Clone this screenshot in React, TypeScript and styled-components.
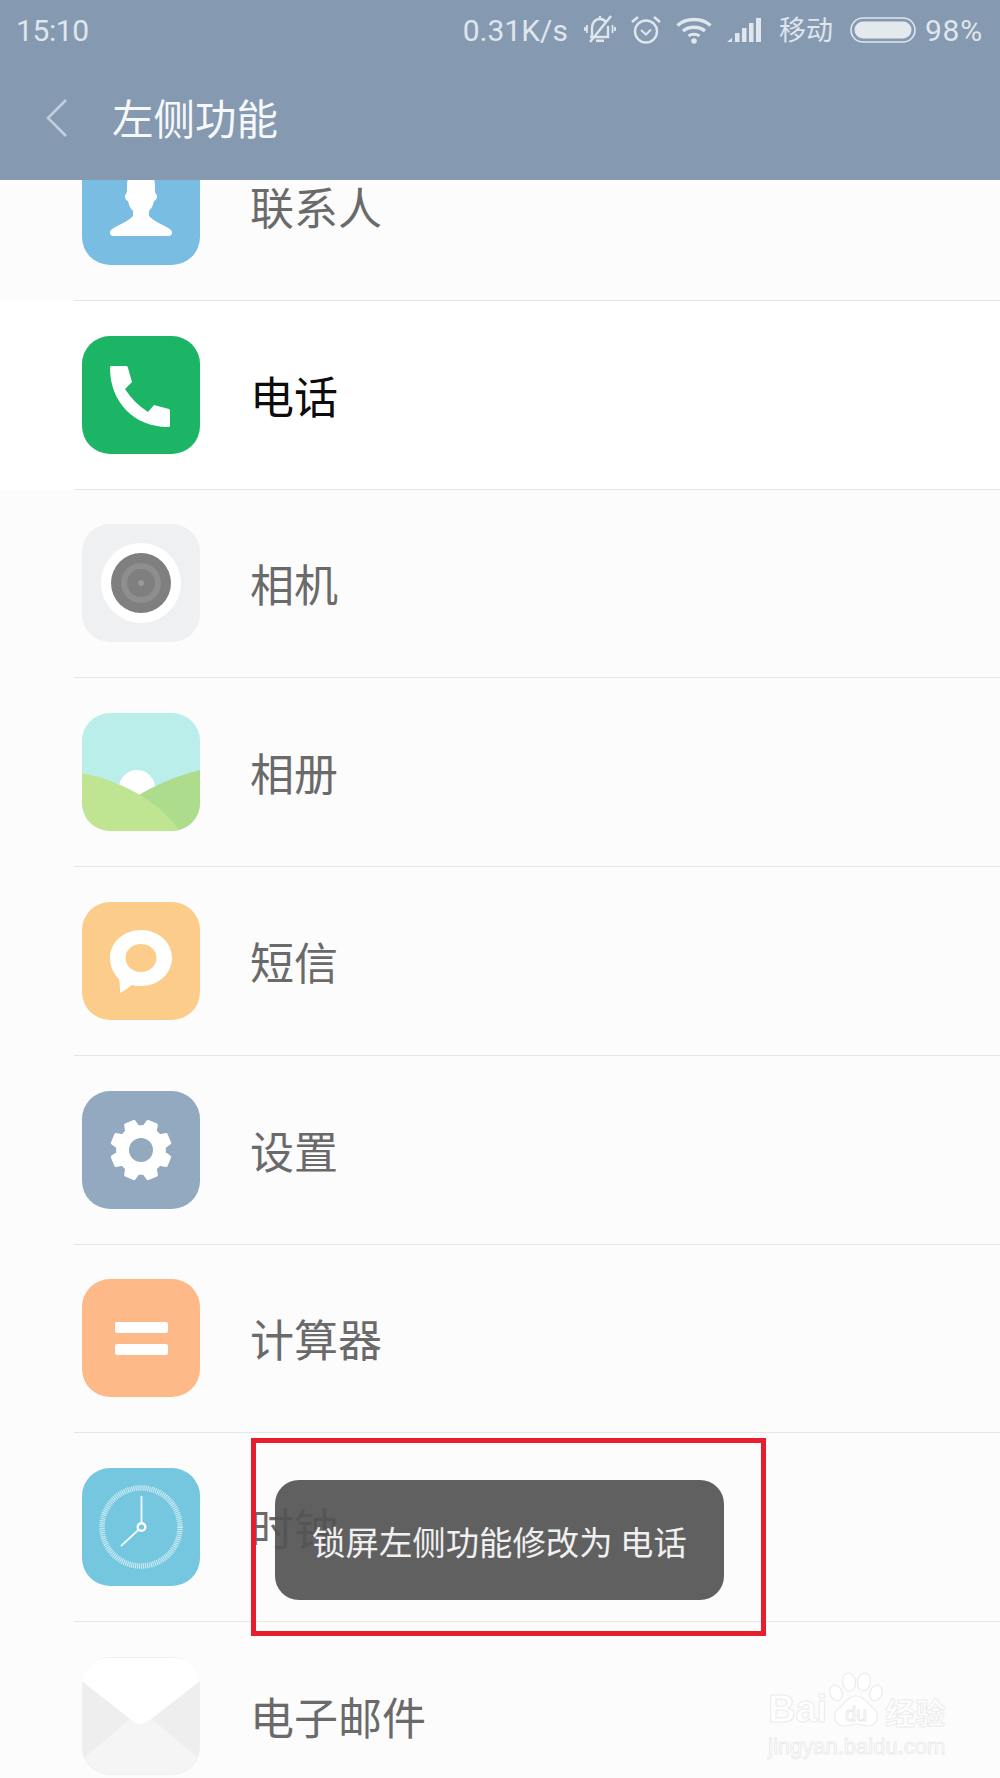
import styled, { createGlobalStyle } from "styled-components";
import type { ReactNode } from "react";

const cjk = `"Noto Sans CJK SC", "Noto Sans", sans-serif`;
const latin = `Roboto, "Noto Sans CJK SC", sans-serif`;

const GlobalStyle = createGlobalStyle`
  html, body {
    margin: 0;
    padding: 0;
    background: #fcfcfc;
  }
  body {
    font-family: ${cjk};
  }
`;

const Page = styled.div`
  position: relative;
  width: 1000px;
  height: 1778px;
  overflow: hidden;
  background: #fcfcfc;
`;

const Header = styled.header`
  position: relative;
  z-index: 2;
  height: 180px;
  box-sizing: border-box;
  background: #8599b1;
  border-bottom: 1px solid #8c9aab;
`;

const StatusBar = styled.div`
  display: flex;
  align-items: center;
  justify-content: space-between;
  height: 56px;
  padding: 4px 17px 0 16px;
  box-sizing: border-box;
  color: #dfe6ed;
  font-family: ${latin};
  font-size: 30px;
  font-weight: 400;
`;

const Clock = styled.span`
  letter-spacing: -0.4px;
`;

const StatusRight = styled.div`
  display: flex;
  align-items: center;
`;

const StatusItem = styled.span<{ $gap: number }>`
  display: flex;
  align-items: center;
  margin-left: ${(p) => p.$gap}px;
`;

const Carrier = styled.span`
  margin-top: -4px;
  font-family: ${cjk};
  font-size: 27px;
`;

const BatteryLevel = styled.span`
  letter-spacing: 0.8px;
`;

const NavBar = styled.div`
  display: flex;
  align-items: center;
  height: 123px;
  padding-left: 46px;
`;

const Title = styled.h1`
  margin: 0 0 0 44px;
  color: #f6f8fa;
  font-size: 41.5px;
  font-weight: 400;
  line-height: 1;
`;

const List = styled.div`
  margin-top: -68px;
`;

const Row = styled.div<{ $active?: boolean }>`
  height: 188.75px;
  box-sizing: border-box;
  padding-left: 74px;
  background: ${(p) => (p.$active ? "#ffffff" : "#fcfcfc")};
`;

const RowBody = styled.div`
  display: flex;
  align-items: center;
  height: 100%;
  box-sizing: border-box;
  padding-left: 8px;
  border-bottom: 1px solid #e6e6e6;
`;

const AppIcon = styled.div<{ $bg: string }>`
  flex: none;
  width: 118px;
  height: 118px;
  border-radius: 28px;
  overflow: hidden;
  background: ${(p) => p.$bg};

  svg {
    display: block;
  }
`;

const RowLabel = styled.span<{ $active?: boolean }>`
  margin-left: 50px;
  color: ${(p) => (p.$active ? "#0c0c0c" : "#6a6a6a")};
  font-size: 44px;
  line-height: 1;
`;

const Toast = styled.div`
  position: absolute;
  z-index: 3;
  left: 275px;
  top: 1480px;
  display: flex;
  align-items: center;
  justify-content: center;
  width: 449px;
  height: 120px;
  border-radius: 24px;
  background: rgba(84, 84, 84, 0.93);
  color: #f0f0f0;
  font-size: 33.4px;
`;

const Annotation = styled.div`
  position: absolute;
  z-index: 4;
  left: 251px;
  top: 1438px;
  width: 515px;
  height: 198px;
  box-sizing: border-box;
  border: 5px solid #e71f2c;
`;

const Watermark = styled.div`
  position: absolute;
  z-index: 5;
  left: 768px;
  top: 1672px;
  width: 180px;
`;

const WatermarkTop = styled.div`
  display: flex;
  align-items: flex-end;
  height: 56px;
`;

const outlined = `
  color: #ffffff;
  -webkit-text-stroke: 1px #ececec;
`;

const BrandText = styled.span`
  ${outlined}
  flex: none;
  font-family: "Liberation Sans", sans-serif;
  font-size: 38px;
  font-weight: 700;
  line-height: 1;
  margin-right: 2px;
`;

const BrandCn = styled.span`
  ${outlined}
  flex: none;
  margin-left: 2px;
  font-size: 30px;
  font-weight: 700;
  line-height: 1.1;
  white-space: nowrap;
`;

const BrandUrl = styled.div`
  ${outlined}
  margin-top: 8px;
  font-family: "Liberation Sans", sans-serif;
  font-size: 22px;
  line-height: 1;
  white-space: nowrap;
`;

const Svg = ({ children, w = 118, h = 118 }: { children: ReactNode; w?: number; h?: number }) => (
  <svg width={w} height={h} viewBox={`0 0 ${w} ${h}`} style={{ flex: "none" }}>
    {children}
  </svg>
);

const gearPath = () => {
  const pts: string[] = [];
  for (let i = 0; i < 8; i++) {
    const a = ((i * 45 + 22.5 - 90) * Math.PI) / 180;
    const s = (Math.PI / 180) * 9;
    const n = (Math.PI / 180) * 15;
    const p = (r: number, t: number) => `${(59 + r * Math.cos(t)).toFixed(1)} ${(59 + r * Math.sin(t)).toFixed(1)}`;
    pts.push(`${i === 0 ? "M" : "L"}${p(23.5, a - n)}`, `L${p(29.5, a - s)}`, `L${p(29.5, a + s)}`, `L${p(23.5, a + n)}`);
  }
  return pts.join(" ") + "Z";
};

const ContactGlyph = () => (
  <Svg>
    <path
      fill="#fff"
      d="M59 24C48 24 45 31 45 39C45 44 45 46 44 47C42 48 43 53 46 54C47 59 49 62 51 64L51 69C46 75 35 78 29 83C27 85 28 89 31 89L87 89C90 89 91 85 89 83C83 78 72 75 67 69L67 64C69 62 71 59 72 54C75 53 76 48 74 47C73 46 73 44 73 39C73 31 70 24 59 24Z"
    />
  </Svg>
);

const PhoneGlyph = () => (
  <Svg>
    <path
      fill="#fff"
      d="M29 30L44 30Q46 30 46 32L50 46L43 53Q52 67 66 76L72 69L87 73Q88 73 88 75L88 90Q88 91 86 91C52 91 28 66 28 32Q28 30 29 30Z"
    />
  </Svg>
);

const CameraGlyph = () => (
  <Svg>
    <circle cx="59" cy="59" r="40" fill="#fff" />
    <circle cx="59" cy="59" r="30" fill="#7f7f7f" />
    <circle cx="59" cy="59" r="20" fill="#8e8e8e" />
    <circle cx="59" cy="59" r="14" fill="#7f7f7f" />
    <circle cx="59" cy="59" r="3" fill="#999" />
  </Svg>
);

const GalleryGlyph = () => (
  <Svg>
    <circle cx="55" cy="75" r="18" fill="#fff" />
    <path fill="#addd8c" d="M118 57C93 63 72 73 55 83L80 118L118 118Z" />
    <path fill="#c0e592" d="M0 60C35 67 74 85 98 118L0 118Z" />
  </Svg>
);

const SmsGlyph = () => (
  <Svg>
    <path
      fill="#fff"
      d="M59 28C42 28 28 40 28 56C28 65 32 72 37 77C38 82 38 87 38 91C42 89 46 86 50 83C53 84 56 84 59 84C76 84 90 72 90 56C90 40 76 28 59 28Z"
    />
    <ellipse cx="59" cy="56" rx="15.5" ry="14" fill="#fccd8a" />
  </Svg>
);

const SettingsGlyph = () => (
  <Svg>
    <path d={gearPath()} fill="#fff" stroke="#fff" strokeWidth="3" strokeLinejoin="round" />
    <circle cx="59" cy="59" r="12" fill="#92a9bf" />
  </Svg>
);

const CalcGlyph = () => (
  <Svg>
    <rect x="33" y="43" width="53" height="11" rx="2" fill="#fff" />
    <rect x="33" y="65" width="53" height="11" rx="2" fill="#fff" />
  </Svg>
);

const ClockGlyph = () => (
  <Svg>
    <circle cx="59" cy="59" r="39" fill="none" stroke="#fff" strokeOpacity=".65" strokeWidth="5.5" strokeDasharray="1.1 .9" />
    <path d="M59.5 28V59L39 78" fill="none" stroke="#fff" strokeOpacity=".9" strokeWidth="1.8" />
    <circle cx="59.5" cy="59" r="3.8" fill="#74c7df" stroke="#fff" strokeWidth="2.4" />
  </Svg>
);

const MailGlyph = () => (
  <Svg>
    <rect x=".5" y=".5" width="117" height="117" rx="27" fill="#f5f5f5" stroke="#efefef" />
    <path fill="#eeeeee" d="M0 24L48 62L1 102Z" />
    <path fill="#eeeeee" d="M118 24L70 62L117 102Z" />
    <path
      fill="#fff"
      d="M0 24V27C0 10 12 1 27 1H91C106 1 118 10 118 27V24L66 64C61 68 56 68 51 64Z"
    />
  </Svg>
);

const BellMuteIcon = () => (
  <Svg w={32} h={32}>
    <path
      d="M8 23V14C8 9 11 5 16 5C18.5 5 20.5 6 22 8M24 12V23H6M16 2V5"
      fill="none"
      stroke="#dfe6ed"
      strokeWidth="2.4"
    />
    <path d="M12 25.5H20V28H12Z" fill="#dfe6ed" />
    <path d="M6 28L27 2" stroke="#dfe6ed" strokeWidth="2.4" />
    <path d="M3 11V19M1 13V17M28.5 11V19M31 13V17" stroke="#dfe6ed" strokeWidth="1.8" />
  </Svg>
);

const AlarmIcon = () => (
  <Svg w={30} h={32}>
    <circle cx="15" cy="17.5" r="11" fill="none" stroke="#dfe6ed" strokeWidth="2.4" />
    <path d="M10 16L15 20.5L20 15.5" fill="none" stroke="#dfe6ed" strokeWidth="2" />
    <path d="M1 8L7 3M29 8L23 3" stroke="#dfe6ed" strokeWidth="2.6" />
  </Svg>
);

const WifiIcon = () => (
  <Svg w={36} h={28}>
    <path d="M1.5 9.5C10 1.5 26 1.5 34.5 9.5" fill="none" stroke="#dfe6ed" strokeWidth="3.4" />
    <path d="M7 15C13 10 23 10 29 15" fill="none" stroke="#dfe6ed" strokeWidth="3.4" />
    <path d="M12.5 20C15.5 17.6 20.5 17.6 23.5 20" fill="none" stroke="#dfe6ed" strokeWidth="3" />
    <circle cx="18" cy="25" r="2.8" fill="#dfe6ed" />
  </Svg>
);

const SignalIcon = () => (
  <Svg w={35} h={26}>
    <path d="M0 25H5V21Z" fill="#dfe6ed" />
    <rect x="8" y="16" width="4.5" height="9" fill="#dfe6ed" />
    <rect x="15" y="11" width="4.5" height="14" fill="#dfe6ed" />
    <rect x="22" y="6" width="4.5" height="19" fill="#dfe6ed" />
    <rect x="29" y="1" width="5" height="24" fill="#dfe6ed" />
  </Svg>
);

const BatteryIcon = () => (
  <Svg w={66} h={26}>
    <rect x="1" y="1" width="64" height="24" rx="12" fill="none" stroke="#dfe6ed" strokeWidth="1.6" />
    <rect x="4.5" y="4.5" width="57" height="17" rx="8.5" fill="#e4e9ee" />
  </Svg>
);

const PawIcon = () => (
  <Svg w={54} h={56}>
    <g fill="#fff" stroke="#ececec" strokeWidth="1.2">
      <ellipse cx="7" cy="21" rx="6" ry="8" transform="rotate(-20 7 21)" />
      <ellipse cx="20" cy="10" rx="6.5" ry="9" transform="rotate(-8 20 10)" />
      <ellipse cx="35" cy="10" rx="6.5" ry="9" transform="rotate(8 35 10)" />
      <ellipse cx="47" cy="21" rx="6" ry="8" transform="rotate(20 47 21)" />
      <path d="M27 24C36 24 39 33 45 37C51 42 49 54 38 54C33 54 31 52 27 52C23 52 21 54 16 54C5 54 3 42 9 37C15 33 18 24 27 24Z" />
    </g>
    <text x="27" y="49" textAnchor="middle" fontFamily="Liberation Sans, sans-serif" fontSize="20" fill="#fff" stroke="#e8e8e8" strokeWidth=".8">
      du
    </text>
  </Svg>
);

const apps = [
  { name: "联系人", bg: "#7abde3", glyph: <ContactGlyph /> },
  { name: "电话", bg: "#1bb565", glyph: <PhoneGlyph />, active: true },
  { name: "相机", bg: "#eff0f2", glyph: <CameraGlyph /> },
  { name: "相册", bg: "#b9eeeb", glyph: <GalleryGlyph /> },
  { name: "短信", bg: "#fccd8a", glyph: <SmsGlyph /> },
  { name: "设置", bg: "#92a9bf", glyph: <SettingsGlyph /> },
  { name: "计算器", bg: "#fdb988", glyph: <CalcGlyph /> },
  { name: "时钟", bg: "#74c7df", glyph: <ClockGlyph /> },
  { name: "电子邮件", bg: "#f5f5f5", glyph: <MailGlyph /> },
];

export default function App() {
  return (
    <Page>
      <GlobalStyle />
      <Header>
        <StatusBar>
          <Clock>15:10</Clock>
          <StatusRight>
            <span>0.31K/s</span>
            <StatusItem $gap={16}>
              <BellMuteIcon />
            </StatusItem>
            <StatusItem $gap={15}>
              <AlarmIcon />
            </StatusItem>
            <StatusItem $gap={15}>
              <WifiIcon />
            </StatusItem>
            <StatusItem $gap={15}>
              <SignalIcon />
            </StatusItem>
            <StatusItem $gap={17}>
              <Carrier>移动</Carrier>
            </StatusItem>
            <StatusItem $gap={17}>
              <BatteryIcon />
            </StatusItem>
            <StatusItem $gap={9}>
              <BatteryLevel>98%</BatteryLevel>
            </StatusItem>
          </StatusRight>
        </StatusBar>
        <NavBar>
          <Svg w={22} h={40}>
            <path d="M20 2L2 20L20 38" fill="none" stroke="#c2cedb" strokeWidth="2.6" />
          </Svg>
          <Title>左侧功能</Title>
        </NavBar>
      </Header>
      <List>
        {apps.map((app) => (
          <Row key={app.name} $active={app.active}>
            <RowBody>
              <AppIcon $bg={app.bg}>{app.glyph}</AppIcon>
              <RowLabel $active={app.active}>{app.name}</RowLabel>
            </RowBody>
          </Row>
        ))}
      </List>
      <Toast>锁屏左侧功能修改为 电话</Toast>
      <Annotation />
      <Watermark>
        <WatermarkTop>
          <BrandText>Bai</BrandText>
          <PawIcon />
          <BrandCn>经验</BrandCn>
        </WatermarkTop>
        <BrandUrl>jingyan.baidu.com</BrandUrl>
      </Watermark>
    </Page>
  );
}
